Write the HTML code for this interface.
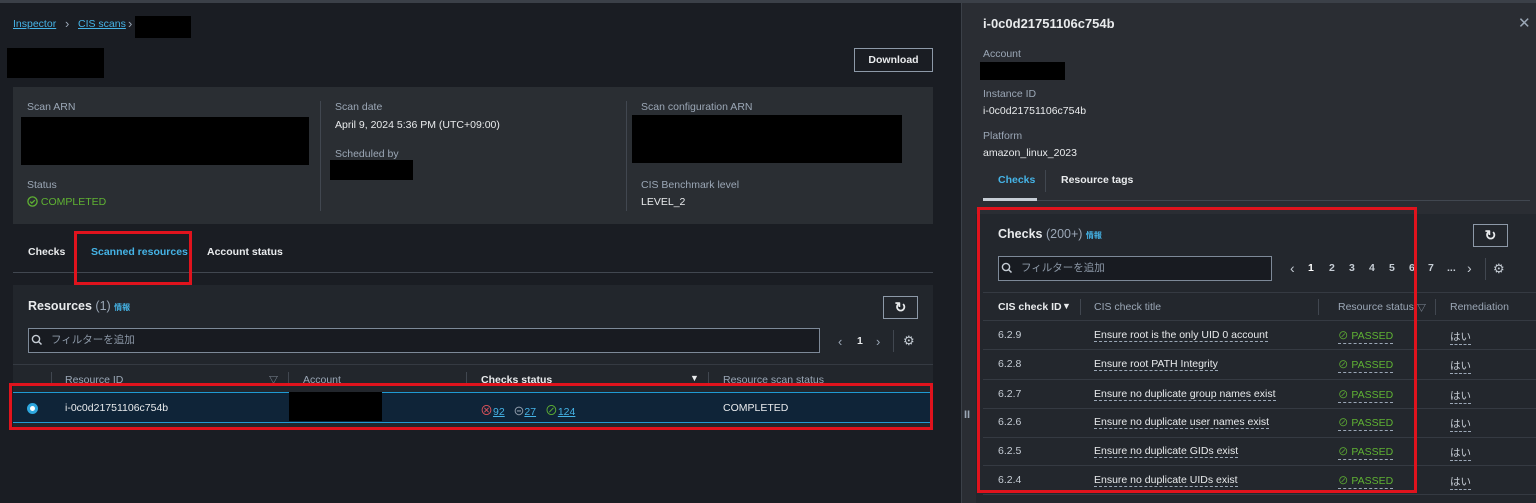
<!DOCTYPE html>
<html><head><meta charset="utf-8"><style>
*{margin:0;padding:0;box-sizing:border-box}
body{width:1536px;height:503px;overflow:hidden;background:#1a1d23;font-family:"Liberation Sans","Noto Sans CJK JP",sans-serif;font-size:10.5px;color:#d1d5db;position:relative}
.a{position:absolute;white-space:nowrap}
.blk{position:absolute;background:#000}
.lbl{color:#9ba7b6}
.b{font-weight:bold;color:#e9ebed}
.lnk{color:#45b3e6;text-decoration:underline}
.red{position:absolute;border:3px solid #e0131d}
.btn{position:absolute;border:1px solid #8d99a8;color:#e9ebed;font-weight:bold;text-align:center}
.inp{position:absolute;border:1px solid #7d8998;background:#181b21;color:#8d99a8}
.dv{position:absolute;width:1px;background:#414750}
.dash{border-bottom:1px dashed #9ba7b6}
.pass{color:#5fb233}
.pg{position:absolute;top:262px;font-weight:bold;color:#c6cdd5}
</style></head><body>
<div class="a" style="left:0;top:0;width:1536px;height:3px;background:#3b4048"></div>
<div class="a lnk" style="left:13px;top:18px">Inspector</div>
<div class="a lbl" style="left:65px;top:16px;font-size:13px">›</div>
<div class="a lnk" style="left:78px;top:18px">CIS scans</div>
<div class="a lbl" style="left:128px;top:16px;font-size:13px">›</div>
<div class="blk" style="left:135px;top:16px;width:56px;height:22px"></div>
<div class="blk" style="left:7px;top:48px;width:97px;height:30px"></div>
<div class="btn" style="left:854px;top:48px;width:79px;height:24px;line-height:22px">Download</div>
<div class="a" style="left:13px;top:87px;width:920px;height:137px;background:#2a2e33"></div>
<div class="dv" style="left:320px;top:101px;height:110px"></div>
<div class="dv" style="left:626px;top:101px;height:110px"></div>
<div class="a lbl" style="left:27px;top:101px">Scan ARN</div>
<div class="blk" style="left:21px;top:117px;width:288px;height:48px"></div>
<div class="a lbl" style="left:27px;top:179px">Status</div>
<div class="a pass" style="left:27px;top:196px"><svg width="11" height="11" style="vertical-align:-2px"><circle cx="5.5" cy="5.5" r="4.6" fill="none" stroke="#5fb233" stroke-width="1.3"/><path d="M3.2 5.6l1.6 1.6 3-3" fill="none" stroke="#5fb233" stroke-width="1.3"/></svg> COMPLETED</div>
<div class="a lbl" style="left:335px;top:101px">Scan date</div>
<div class="a" style="left:335px;top:119px;color:#e9ebed">April 9, 2024 5:36 PM (UTC+09:00)</div>
<div class="a lbl" style="left:335px;top:148px">Scheduled by</div>
<div class="blk" style="left:330px;top:160px;width:83px;height:20px"></div>
<div class="a lbl" style="left:641px;top:101px">Scan configuration ARN</div>
<div class="blk" style="left:632px;top:115px;width:270px;height:48px"></div>
<div class="a lbl" style="left:641px;top:179px">CIS Benchmark level</div>
<div class="a" style="left:641px;top:196px;color:#e9ebed">LEVEL_2</div>
<div class="a b" style="left:28px;top:246px">Checks</div>
<div class="a b" style="left:91px;top:246px;color:#45b3e6">Scanned resources</div>
<div class="a b" style="left:207px;top:246px">Account status</div>
<div class="a" style="left:13px;top:272px;width:920px;height:1px;background:#414750"></div>
<div class="red" style="left:74px;top:231px;width:118px;height:54px"></div>
<div class="a" style="left:13px;top:285px;width:920px;height:145px;background:#22262c"></div>
<div class="a b" style="left:28px;top:299px;font-size:12.5px">Resources <span style="font-weight:normal;color:#9ba7b6">(1)</span> <span style="font-size:8px;color:#45b3e6">情報</span></div>
<div class="btn" style="left:883px;top:296px;width:35px;height:23px;line-height:20px;font-size:14px">↻</div>
<div class="inp" style="left:28px;top:328px;width:792px;height:25px;line-height:23px;padding-left:22px">フィルターを追加</div>
<svg class="a" style="left:31px;top:334px" width="12" height="12"><circle cx="5" cy="5" r="3.6" fill="none" stroke="#c6cdd5" stroke-width="1.4"/><path d="M7.6 7.6L10.5 10.5" stroke="#c6cdd5" stroke-width="1.5"/></svg>
<div class="a lbl" style="left:838px;top:334px;font-size:13px">‹</div>
<div class="a b" style="left:857px;top:335px">1</div>
<div class="a lbl" style="left:876px;top:334px;font-size:13px">›</div>
<div class="dv" style="left:893px;top:330px;height:22px"></div>
<div class="a" style="left:903px;top:333px;font-size:13px;color:#c6cdd5">⚙</div>
<div class="a" style="left:13px;top:364px;width:920px;height:1px;background:#353a42"></div>
<div class="dv" style="left:51px;top:372px;height:14px"></div>
<div class="a lbl" style="left:65px;top:374px">Resource ID</div>
<div class="a lbl" style="left:269px;top:373px;font-size:9px">▽</div>
<div class="dv" style="left:288px;top:372px;height:14px"></div>
<div class="a lbl" style="left:303px;top:374px">Account</div>
<div class="dv" style="left:466px;top:372px;height:14px"></div>
<div class="a b" style="left:481px;top:374px">Checks status</div>
<div class="a b" style="left:690px;top:373px;font-size:9px">▼</div>
<div class="dv" style="left:708px;top:372px;height:14px"></div>
<div class="a lbl" style="left:723px;top:374px">Resource scan status</div>
<div class="a" style="left:13px;top:392px;width:920px;height:31px;background:#0f2438;border-top:1px solid #1f9ad3;border-bottom:1px solid #1f9ad3"></div>
<div class="a" style="left:27px;top:403px;width:11px;height:11px;border-radius:50%;background:#fff;border:3px solid #2ea7de"></div>
<div class="a" style="left:65px;top:402px;color:#e9ebed">i-0c0d21751106c754b</div>
<div class="blk" style="left:289px;top:392px;width:93px;height:29px"></div>
<div class="a" style="left:480px;top:400px;color:#45b3e6"><span style="color:#e0535a;font-size:13px">⊗</span><u>92</u>&nbsp;&nbsp; <span style="color:#8d99a8;font-size:13px">⊝</span><u>27</u>&nbsp;&nbsp; <span class="pass" style="font-size:13px">⊘</span><u>124</u></div>
<div class="a" style="left:723px;top:402px;color:#e9ebed">COMPLETED</div>
<div class="red" style="left:9px;top:383px;width:924px;height:47px"></div>
<!-- right panel -->
<div class="a" style="left:961px;top:3px;width:575px;height:500px;background:#2a2d33;border-left:1px solid #3b4048"></div>
<div class="a" style="left:964px;top:409px;color:#9ba7b6;font-weight:bold;font-size:11px">II</div>
<div class="a b" style="left:983px;top:16px;font-size:13px">i-0c0d21751106c754b</div>
<div class="a lbl" style="left:1518px;top:14px;font-size:15px">✕</div>
<div class="a lbl" style="left:983px;top:48px">Account</div>
<div class="blk" style="left:980px;top:62px;width:85px;height:18px"></div>
<div class="a lbl" style="left:983px;top:88px">Instance ID</div>
<div class="a" style="left:983px;top:105px;color:#e9ebed">i-0c0d21751106c754b</div>
<div class="a lbl" style="left:983px;top:130px">Platform</div>
<div class="a" style="left:983px;top:147px;color:#e9ebed">amazon_linux_2023</div>
<div class="a b" style="left:998px;top:174px;color:#45b3e6">Checks</div>
<div class="dv" style="left:1045px;top:170px;height:22px"></div>
<div class="a b" style="left:1061px;top:174px">Resource tags</div>
<div class="a" style="left:983px;top:200px;width:547px;height:1px;background:#414750"></div>
<div class="a" style="left:983px;top:198px;width:54px;height:3px;background:#c6cdd5"></div>
<div class="a" style="left:976px;top:214px;width:560px;height:289px;background:#23272d"></div>
<div class="a b" style="left:998px;top:227px;font-size:12.5px">Checks <span style="font-weight:normal;color:#9ba7b6">(200+)</span> <span style="font-size:8px;color:#45b3e6">情報</span></div>
<div class="btn" style="left:1473px;top:224px;width:35px;height:23px;line-height:20px;font-size:14px">↻</div>
<div class="inp" style="left:998px;top:256px;width:274px;height:25px;line-height:23px;padding-left:22px">フィルターを追加</div>
<svg class="a" style="left:1001px;top:262px" width="12" height="12"><circle cx="5" cy="5" r="3.6" fill="none" stroke="#c6cdd5" stroke-width="1.4"/><path d="M7.6 7.6L10.5 10.5" stroke="#c6cdd5" stroke-width="1.5"/></svg>
<div class="pg lbl" style="left:1290px;top:260px;font-size:14px;font-weight:normal">‹</div>
<div class="pg" style="left:1308px;color:#fff">1</div>
<div class="pg" style="left:1329px">2</div>
<div class="pg" style="left:1349px">3</div>
<div class="pg" style="left:1369px">4</div>
<div class="pg" style="left:1389px">5</div>
<div class="pg" style="left:1409px">6</div>
<div class="pg" style="left:1428px">7</div>
<div class="pg" style="left:1447px">...</div>
<div class="pg" style="left:1467px;top:260px;font-size:14px;font-weight:normal">›</div>
<div class="dv" style="left:1485px;top:258px;height:22px"></div>
<div class="a" style="left:1493px;top:261px;font-size:13px;color:#c6cdd5">⚙</div>
<div class="a" style="left:983px;top:292px;width:553px;height:1px;background:#353a42"></div>
<div class="a b" style="left:998px;top:301px">CIS check ID</div>
<div class="a b" style="left:1062px;top:301px;font-size:9px">▼</div>
<div class="dv" style="left:1080px;top:299px;height:16px"></div>
<div class="a lbl" style="left:1094px;top:301px">CIS check title</div>
<div class="dv" style="left:1318px;top:299px;height:16px"></div>
<div class="a lbl" style="left:1338px;top:301px">Resource status</div>
<div class="a lbl" style="left:1417px;top:301px;font-size:9px">▽</div>
<div class="dv" style="left:1435px;top:299px;height:16px"></div>
<div class="a lbl" style="left:1450px;top:301px">Remediation</div>
<div class="a" style="left:983px;top:320px;width:553px;height:1px;background:#353a42"></div>
<div class="a" style="left:983px;top:349px;width:553px;height:1px;background:#353a42"></div>
<div class="a" style="left:983px;top:379px;width:553px;height:1px;background:#353a42"></div>
<div class="a" style="left:983px;top:408px;width:553px;height:1px;background:#353a42"></div>
<div class="a" style="left:983px;top:437px;width:553px;height:1px;background:#353a42"></div>
<div class="a" style="left:983px;top:465px;width:553px;height:1px;background:#353a42"></div>
<div class="a" style="left:983px;top:494px;width:553px;height:1px;background:#353a42"></div>

<div class="a" style="left:998px;top:329px;color:#c6cdd5">6.2.9</div><div class="a dash" style="left:1094px;top:329px;color:#e9ebed">Ensure root is the only UID 0 account</div><div class="a pass dash" style="left:1338px;top:328px">⊘ PASSED</div><div class="a dash" style="left:1450px;top:329px;color:#c6cdd5">はい</div>
<div class="a" style="left:998px;top:358px;color:#c6cdd5">6.2.8</div><div class="a dash" style="left:1094px;top:358px;color:#e9ebed">Ensure root PATH Integrity</div><div class="a pass dash" style="left:1338px;top:357px">⊘ PASSED</div><div class="a dash" style="left:1450px;top:358px;color:#c6cdd5">はい</div>
<div class="a" style="left:998px;top:388px;color:#c6cdd5">6.2.7</div><div class="a dash" style="left:1094px;top:388px;color:#e9ebed">Ensure no duplicate group names exist</div><div class="a pass dash" style="left:1338px;top:387px">⊘ PASSED</div><div class="a dash" style="left:1450px;top:388px;color:#c6cdd5">はい</div>
<div class="a" style="left:998px;top:416px;color:#c6cdd5">6.2.6</div><div class="a dash" style="left:1094px;top:416px;color:#e9ebed">Ensure no duplicate user names exist</div><div class="a pass dash" style="left:1338px;top:415px">⊘ PASSED</div><div class="a dash" style="left:1450px;top:416px;color:#c6cdd5">はい</div>
<div class="a" style="left:998px;top:445px;color:#c6cdd5">6.2.5</div><div class="a dash" style="left:1094px;top:445px;color:#e9ebed">Ensure no duplicate GIDs exist</div><div class="a pass dash" style="left:1338px;top:444px">⊘ PASSED</div><div class="a dash" style="left:1450px;top:445px;color:#c6cdd5">はい</div>
<div class="a" style="left:998px;top:474px;color:#c6cdd5">6.2.4</div><div class="a dash" style="left:1094px;top:474px;color:#e9ebed">Ensure no duplicate UIDs exist</div><div class="a pass dash" style="left:1338px;top:473px">⊘ PASSED</div><div class="a dash" style="left:1450px;top:474px;color:#c6cdd5">はい</div>

<div class="red" style="left:977px;top:207px;width:440px;height:286px"></div>
</body></html>
